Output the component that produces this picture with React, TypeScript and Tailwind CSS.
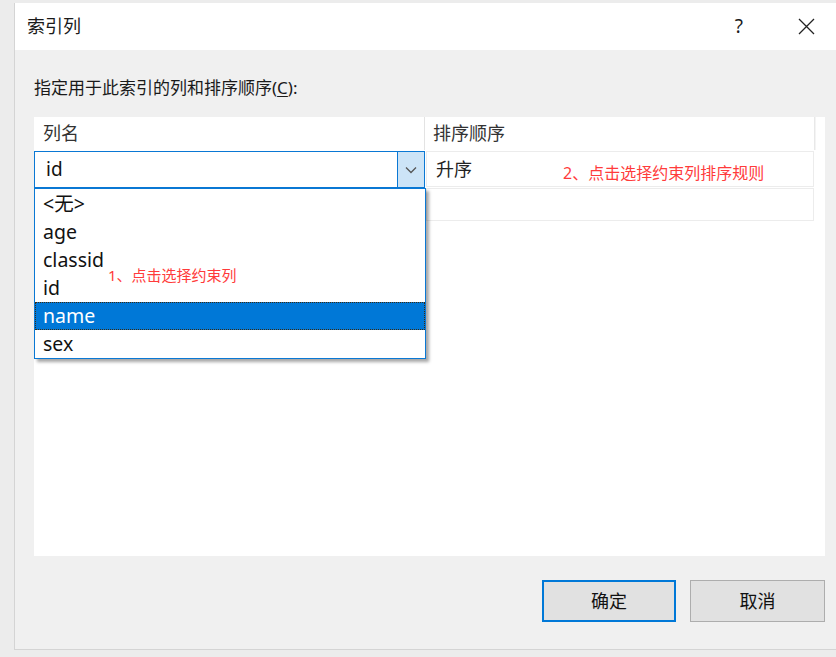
import React from "react";

const cjk = { fontFamily: '"Noto Sans", "Noto Sans CJK SC", sans-serif' };

const items = ["<无>", "age", "classid", "id", "name", "sex"];

const App = () => {
  return (
    <div className="w-[836px] h-[657px] bg-[#ececec] pt-[3px] pl-[14px] overflow-hidden" style={cjk}>
      <div className="h-[647px] flex flex-col border-l border-b border-[#d4d4d4]">
        {/* title bar */}
        <div className="h-[47px] bg-white flex items-center pl-[12px] text-[18px] text-[#1a1a1a]">
          <span>索引列</span>
          <span className="ml-auto mr-[55px] text-[19px]">?</span>
          <svg width="17" height="17" viewBox="0 0 17 17" className="mr-[21px]">
            <path d="M1 1 L16 16 M16 1 L1 16" stroke="#222" strokeWidth="1.3" fill="none" />
          </svg>
        </div>

        {/* body */}
        <div className="flex-1 bg-[#f0f0f0] pl-[19px] pr-[11px] flex flex-col">
          <div className="mt-[24px] h-[28px] flex items-center text-[17px] text-[#1a1a1a]">
            指定用于此索引的列和排序顺序(<span className="underline underline-offset-2">C</span>):
          </div>

          <div className="relative mt-[15px] h-[439px] bg-white">
            {/* header */}
            <div className="flex h-[33px] text-[18px] text-[#333]">
              <div className="w-[391px] flex items-center pl-[9px] border-r border-[#e3e3e3]">列名</div>
              <div className="w-[390px] flex items-center pl-[8px] border-r border-[#e8e8e8] shadow-[1px_0_0_#f4f4f4]">排序顺序</div>
            </div>
            {/* row 1 */}
            <div className="flex h-[36px] mt-[1px]">
              <div className="w-[391px] h-[37px] border border-[#0a78d4] flex items-center">
                <span className="pl-[11px] flex-1 text-[19px] text-[#111]">id</span>
                <div className="w-[27px] h-full bg-[#cce4f7] border-l border-[#0a78d4] flex items-center justify-center">
                  <svg width="12" height="8" viewBox="0 0 12 8">
                    <path d="M1 1.5 L6 6.5 L11 1.5" stroke="#555" strokeWidth="1.3" fill="none" />
                  </svg>
                </div>
              </div>
              <div className="w-[388px] ml-[1px] border border-[#ececec] flex items-center pl-[9px] text-[18px] text-[#222]">
                升序
                <span className="ml-[91px] mt-[8px] text-[16px] text-[#ff3b3b]">2、点击选择约束列排序规则</span>
              </div>
            </div>
            {/* row 2 */}
            <div className="flex h-[33px] mt-[1px]">
              <div className="w-[391px]" />
              <div className="w-[388px] ml-[1px] border border-[#ececec]" />
            </div>

            {/* dropdown list */}
            <div className="absolute left-0 top-[71px] w-[392px] border border-[#0a78d4] pt-[1px] bg-white shadow-[3px_3px_3px_rgba(0,0,0,0.35)] text-[19.5px] text-[#111]">
              {items.map((it) =>
                it === "name" ? (
                  <div
                    key={it}
                    className="h-[28px] flex items-center pl-[8px] bg-[#0078d7] text-white outline-1 outline-dotted outline-[#3a2a10] -outline-offset-1"
                  >
                    {it}
                  </div>
                ) : (
                  <div key={it} className="h-[28px] flex items-center pl-[8px] relative">
                    {it}
                    {it === "classid" && (
                      <span className="absolute left-[73px] top-[18px] text-[15px] text-[#ff3b3b]">1、点击选择约束列</span>
                    )}
                  </div>
                )
              )}
            </div>
          </div>

          {/* buttons */}
          <div className="mt-[24px] flex justify-end gap-[14px] text-[18px] text-[#111]">
            <button className="w-[134px] h-[42px] bg-[#e1e1e1] border-2 border-[#0078d7] flex items-center justify-center">
              确定
            </button>
            <button className="w-[135px] h-[42px] bg-[#e1e1e1] border border-[#adadad] flex items-center justify-center">
              取消
            </button>
          </div>
        </div>
      </div>
    </div>
  );
};

export default App;
